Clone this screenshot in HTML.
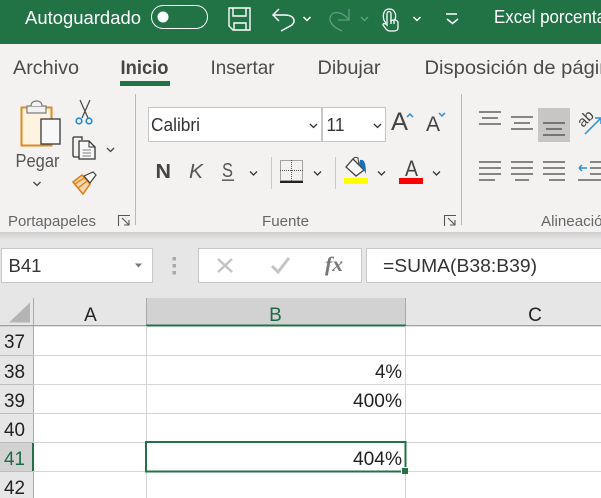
<!DOCTYPE html>
<html lang="es"><head><meta charset="utf-8"><title>Excel porcentaje</title>
<style>
html,body{margin:0;padding:0;background:#fff;width:601px;height:498px;overflow:hidden}
svg{display:block}
text{font-family:"Liberation Sans",sans-serif}
</style></head><body>
<svg width="601" height="498" viewBox="0 0 601 498" xmlns="http://www.w3.org/2000/svg">
<defs><linearGradient id="sh" x1="0" y1="0" x2="0" y2="1"><stop offset="0" stop-color="#cfcfcf"/><stop offset="1" stop-color="#e6e6e6"/></linearGradient></defs>
<rect width="601" height="498" fill="#fff"/>
<!-- title bar -->
<rect width="601" height="44" fill="#217346"/>
<text x="25" y="24" font-size="18" fill="#fff" textLength="116" lengthAdjust="spacingAndGlyphs">Autoguardado</text>
<rect x="151.500" y="5.500" width="56" height="23" rx="11.500" fill="none" stroke="#fff" stroke-width="1"/>
<circle cx="163" cy="17" r="5.500" fill="#fff"/>
<g fill="none" stroke="#fff" stroke-width="1.400">
<path d="M229 8H250V30H233L229 26Z"/><path d="M233 8V16H246V8"/><path d="M234 30V23H246V30"/>
<path d="M279 9L273 15L279 21M273 15H285C294 15 296 21 292 25L281 31" stroke-width="1.500"/>
<path d="M303.500 17l3.500 3.500 3.500-3.500" stroke-width="1.500"/>
</g>
<g fill="none" stroke="#5f9e80" stroke-width="1.400">
<path d="M349 9V20H338M349 20C343 12 332 9 330 18C329 23 335 28 342 31" stroke-width="1.300"/>
<path d="M361 17l3.500 3.500 3.500-3.500"/>
</g>
<g fill="none" stroke="#fff" stroke-width="1.300">
<path d="M386 23C382 20 382 9 389 9C396 9 397 17 394 21"/>
<path d="M387 25V13.500C387 11 391 11 391 13.500V21C394 19 398 20 398 23V28C398 30 396 31 394 31H390C387 31 386 29 383 25C383 23 385 23 387 25Z" fill="#217346"/>
<path d="M394 20V24M391 20V24"/>
<path d="M413.500 17l3.500 3.500 3.500-3.500" stroke-width="1.500"/>
<path d="M446 14H457" stroke-width="1.500"/><path d="M447 19l5.500 4.500 5.500-4.500" stroke-width="1.500"/>
</g>
<text x="494" y="23" font-size="18" fill="#fff" textLength="112" lengthAdjust="spacingAndGlyphs">Excel porcenta</text>

<!-- ribbon -->
<rect y="44" width="601" height="189" fill="#f3f2f1"/>
<g font-size="19.500" fill="#4a4a4a">
<text x="13" y="74" textLength="66" lengthAdjust="spacingAndGlyphs">Archivo</text>
<text x="120.500" y="74" font-weight="bold" fill="#444" textLength="48" lengthAdjust="spacingAndGlyphs">Inicio</text>
<text x="210.500" y="74" textLength="64" lengthAdjust="spacingAndGlyphs">Insertar</text>
<text x="317.500" y="74" textLength="63" lengthAdjust="spacingAndGlyphs">Dibujar</text>
<text x="424.500" y="74" textLength="186" lengthAdjust="spacingAndGlyphs">Disposición de págin</text>
</g>
<rect x="120" y="81" width="50" height="5" fill="#217346"/>
<rect x="135" y="94" width="1" height="131" fill="#b8b8b8"/>
<rect x="461" y="94" width="1" height="131" fill="#b8b8b8"/>

<!-- clipboard -->
<rect x="21.500" y="107.500" width="30" height="38" fill="#fdf3df" stroke="#e08a1e" stroke-width="2"/>
<rect x="27" y="106" width="19" height="7" fill="#f2f2f2" stroke="#7a7a7a" stroke-width="1.200"/>
<path d="M31 106C31 103 33 101 36.500 101C40 101 42 103 42 106" fill="#f2f2f2" stroke="#7a7a7a" stroke-width="1.200"/>
<rect x="41" y="119" width="19" height="25" fill="#f8f8f8" stroke="#444" stroke-width="1.400"/>
<text x="15.500" y="167" font-size="18" fill="#555" textLength="44" lengthAdjust="spacingAndGlyphs">Pegar</text>
<path d="M33.500 182l3.500 3.500 3.500-3.500" fill="none" stroke="#444" stroke-width="1.300"/>
<!-- scissors -->
<path d="M80 100L88 118M90 100L82 118" stroke="#444" stroke-width="1.200" fill="none"/>
<circle cx="79" cy="121" r="2.800" fill="none" stroke="#1f87d6" stroke-width="1.600"/>
<circle cx="89" cy="121" r="2.800" fill="none" stroke="#1f87d6" stroke-width="1.600"/>
<!-- copy -->
<path d="M80 157H74.500C73 157 73 156 73 155V138C73 137 73.500 137 74.500 137H82V140" fill="none" stroke="#333" stroke-width="1.300"/>
<path d="M79 141H89L95 147V159H79Z" fill="#f8f8f8" stroke="#333" stroke-width="1.300"/>
<path d="M89 141V147H95" fill="none" stroke="#333" stroke-width="1"/>
<path d="M82.500 150H91M82.500 153H91M82.500 156H91" stroke="#555" stroke-width="0.800"/>
<path d="M107 148l3.500 3.500 3.500-3.500" fill="none" stroke="#444" stroke-width="1.300"/>
<!-- format painter -->
<path d="M73 182L82 175L90 184L83 194Z" fill="#f6d9b4" stroke="#e07b10" stroke-width="1.500"/>
<path d="M75 184L84 178M78 188L87 181" stroke="#e58a20" stroke-width="1.500"/>
<path d="M84 176L93 172L96 175L90 183Z" fill="#f8f8f8" stroke="#444" stroke-width="1.200"/>
<text x="8" y="226" font-size="15" fill="#666" textLength="88" lengthAdjust="spacingAndGlyphs">Portapapeles</text>
<g fill="none" stroke="#555" stroke-width="1.100">
<path d="M118.500 226V215.500H130M122 218L129 225M129 220V225H124"/>
<path d="M444.500 226V215.500H456M448 218L455 225M455 220V225H450"/>
</g>

<!-- font -->
<rect x="148.500" y="107.500" width="173" height="34" fill="#fff" stroke="#c8c6c4"/>
<rect x="322.500" y="107.500" width="63" height="34" fill="#fff" stroke="#c8c6c4"/>
<text x="151" y="131" font-size="18" fill="#333" textLength="49" lengthAdjust="spacingAndGlyphs">Calibri</text>
<text x="326.500" y="131" font-size="18" fill="#333" textLength="18" lengthAdjust="spacingAndGlyphs">11</text>
<g fill="none" stroke="#333" stroke-width="1.300">
<path d="M310 124l3.500 3.500 3.500-3.500M374 124l3.500 3.500 3.500-3.500"/>
<path d="M250 171.500l3.500 3.500 3.500-3.500M314 171.500l3.500 3.500 3.500-3.500M378 171.500l3.500 3.500 3.500-3.500M433 171.500l3.500 3.500 3.500-3.500"/>
</g>
<text x="391" y="130" font-size="25" fill="#444" textLength="17" lengthAdjust="spacingAndGlyphs">A</text>
<text x="426" y="131" font-size="21" fill="#444" textLength="14" lengthAdjust="spacingAndGlyphs">A</text>
<path d="M407 117l3 -3 3 3" fill="none" stroke="#2b8fd8" stroke-width="1.500"/>
<path d="M439 113l3 3 3 -3" fill="none" stroke="#2b8fd8" stroke-width="1.500"/>
<text x="155.500" y="178" font-size="20" font-weight="bold" fill="#444" textLength="15.500" lengthAdjust="spacingAndGlyphs">N</text>
<text x="189" y="178" font-size="20" font-style="italic" fill="#555" textLength="14" lengthAdjust="spacingAndGlyphs">K</text>
<text x="222" y="177" font-size="20" fill="#555" textLength="11" lengthAdjust="spacingAndGlyphs">S</text>
<rect x="222" y="179.500" width="12" height="1.300" fill="#444"/>
<rect x="271" y="157" width="1" height="32" fill="#c8c8c8"/>
<rect x="335" y="157" width="1" height="32" fill="#c8c8c8"/>
<!-- borders -->
<g fill="none" stroke="#555" stroke-width="1" stroke-dasharray="1 1">
<rect x="280.500" y="160.500" width="22" height="20"/><path d="M291.500 160V181M280 170.500H303"/>
</g>
<rect x="280" y="181" width="23" height="2" fill="#222"/>
<!-- fill -->
<path d="M353 159L364 170L356 176L346 167Z" fill="#f8f8f8" stroke="#444" stroke-width="1.300"/>
<path d="M353 159C354 157 356 157 358 158L359 165" fill="none" stroke="#444" stroke-width="1"/>
<path d="M360 160C364 159 366 162 366 174C364 170 362 166 359 165Z" fill="#1772b8"/>
<rect x="344" y="178" width="24" height="6" fill="#ffff00"/>
<text x="405" y="176" font-size="22" fill="#444" textLength="13" lengthAdjust="spacingAndGlyphs">A</text>
<rect x="399" y="178" width="24" height="6" fill="#ff0000"/>
<text x="262" y="226" font-size="15" fill="#666" textLength="47" lengthAdjust="spacingAndGlyphs">Fuente</text>

<!-- alignment -->
<rect x="538" y="108" width="32" height="34" fill="#c8c6c4"/>
<g stroke="#444" stroke-width="1.300">
<path d="M479 112H501M482 118H498M479 124H501"/>
<path d="M511 117H533M514 123H530M511 129H533"/>
<path d="M543 123H565M546 129H562M543 135H565"/>
<path d="M479 162H501M479 168H501M479 174H501M479 180H495" stroke-width="1.200"/>
<path d="M511 162H533M511 168H533M511 174H533M515 180H529" stroke-width="1.200"/>
<path d="M543 162H565M543 168H565M543 174H565M549 180H565" stroke-width="1.200"/>
<path d="M590 162H601M590 168H601M590 174H601M578 180H601" stroke-width="1.200"/>
</g>
<path d="M585 134L600 119M595 118H601V124" fill="none" stroke="#2b8fd8" stroke-width="1.500"/>
<path d="M579 168H587M579 168l3 -3M579 168l3 3" fill="none" stroke="#2b8fd8" stroke-width="1.500"/>
<text x="0" y="0" font-size="15" fill="#444" transform="translate(583,128) rotate(-45)">ab</text>
<text x="541" y="226" font-size="15" fill="#666" textLength="70" lengthAdjust="spacingAndGlyphs">Alineación</text>

<!-- formula bar -->
<rect y="233" width="601" height="65" fill="#e6e6e6"/>
<rect y="232" width="601" height="8" fill="url(#sh)"/>
<rect x="1.500" y="248.500" width="151" height="34" fill="#fff" stroke="#c6c6c6"/>
<text x="8.500" y="272" font-size="18" fill="#333" textLength="33" lengthAdjust="spacingAndGlyphs">B41</text>
<path d="M135 263.500H142L138.500 267.500Z" fill="#777"/>
<rect x="172.500" y="257" width="3.500" height="3.500" fill="#aaa"/>
<rect x="172.500" y="264" width="3.500" height="3.500" fill="#aaa"/>
<rect x="172.500" y="271" width="3.500" height="3.500" fill="#aaa"/>
<rect x="198.500" y="248.500" width="163" height="34" fill="#fff" stroke="#c6c6c6"/>
<path d="M218 259L232 272M232 259L218 272" stroke="#c4c4c4" stroke-width="2.500"/>
<path d="M272 266L278 272L289 258" fill="none" stroke="#c4c4c4" stroke-width="3"/>
<text x="325" y="271" font-size="21" font-style="italic" font-weight="bold" fill="#777" style="font-family:'Liberation Serif',serif" textLength="18" lengthAdjust="spacingAndGlyphs">fx</text>
<rect x="366.500" y="248.500" width="235" height="34" fill="#fff" stroke="#c6c6c6"/>
<text x="383" y="272" font-size="18" fill="#333" textLength="154" lengthAdjust="spacingAndGlyphs">=SUMA(B38:B39)</text>

<!-- headers -->
<rect y="298" width="601" height="28" fill="#e6e6e6"/>
<rect y="326" width="33" height="172" fill="#e6e6e6"/>
<rect x="146" y="298" width="260" height="28" fill="#d2d2d2"/>
<rect y="442" width="32" height="30" fill="#d2d2d2"/>
<path d="M9 322.500L30 302.500V322.500Z" fill="#b4b4b4"/>
<rect x="33" y="298" width="1" height="200" fill="#a8a8a8"/>
<rect x="0" y="325" width="601" height="1.300" fill="#a0a0a0"/>
<rect x="146" y="298" width="1" height="28" fill="#a8a8a8"/>
<rect x="405" y="298" width="1" height="28" fill="#a8a8a8"/>
<rect x="146" y="324.500" width="260" height="2" fill="#217346"/>
<rect x="32" y="442" width="2" height="30" fill="#217346"/>
<g font-size="19" fill="#222" text-anchor="middle">
<text x="90.500" y="321">A</text><text x="275.500" y="321" fill="#1d6a45">B</text><text x="535" y="321">C</text>
</g>
<g font-size="19" fill="#222">
<text x="4" y="348" textLength="21" lengthAdjust="spacingAndGlyphs">37</text>
<text x="4" y="378" textLength="21" lengthAdjust="spacingAndGlyphs">38</text>
<text x="4" y="407" textLength="21" lengthAdjust="spacingAndGlyphs">39</text>
<text x="4" y="436" textLength="21" lengthAdjust="spacingAndGlyphs">40</text>
<text x="4" y="465" textLength="21" lengthAdjust="spacingAndGlyphs" fill="#1d6a45">41</text>
<text x="4" y="494" textLength="21" lengthAdjust="spacingAndGlyphs">42</text>
</g>

<!-- grid -->
<g fill="#d4d4d4">
<rect x="0" y="355" width="601" height="1"/><rect x="0" y="384" width="601" height="1"/>
<rect x="0" y="413" width="601" height="1"/><rect x="0" y="442" width="601" height="1"/>
<rect x="0" y="471" width="601" height="1"/>
<rect x="146" y="326" width="1" height="172"/><rect x="405" y="326" width="1" height="172"/>
</g>
<rect x="0" y="355" width="33" height="1" fill="#bdbdbd"/><rect x="0" y="384" width="33" height="1" fill="#bdbdbd"/>
<rect x="0" y="413" width="33" height="1" fill="#bdbdbd"/><rect x="0" y="442" width="33" height="1" fill="#bdbdbd"/>
<rect x="0" y="471" width="33" height="1" fill="#bdbdbd"/>

<!-- cells -->
<g font-size="19.500" fill="#222">
<text x="375" y="378" textLength="27" lengthAdjust="spacingAndGlyphs">4%</text>
<text x="353" y="407" textLength="49" lengthAdjust="spacingAndGlyphs">400%</text>
<text x="353" y="465" textLength="49" lengthAdjust="spacingAndGlyphs">404%</text>
</g>
<rect x="146" y="442" width="259.500" height="29.500" fill="none" stroke="#217346" stroke-width="2"/>
<rect x="401" y="467" width="7" height="7" fill="#fff"/>
<rect x="402" y="468" width="6" height="6" fill="#217346"/>
</svg>
</body></html>
